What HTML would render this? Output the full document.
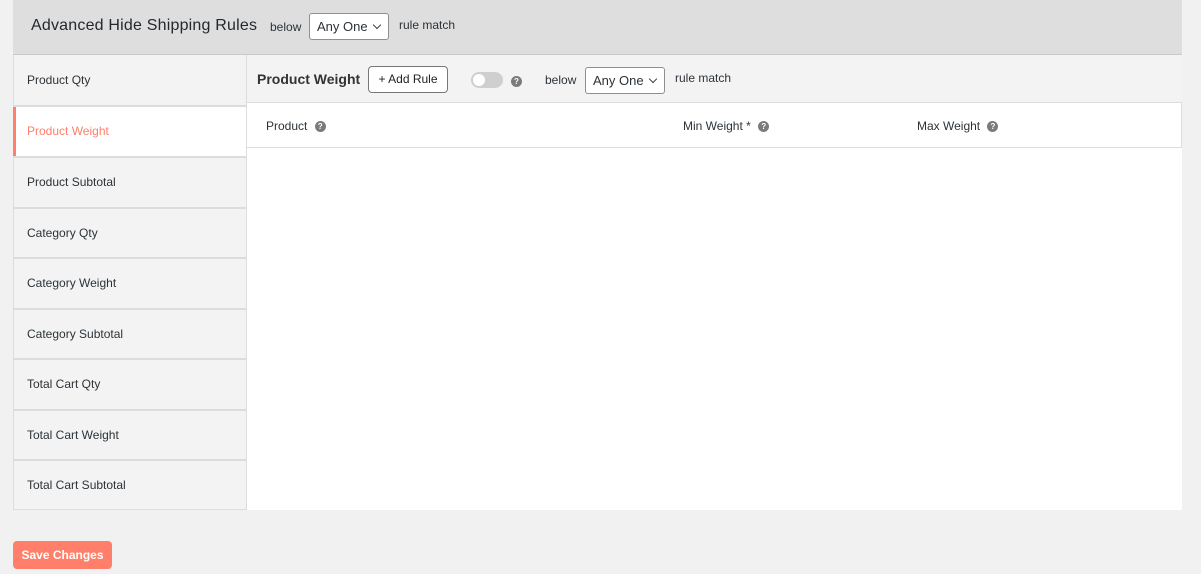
<!DOCTYPE html>
<html><head><style>
*{box-sizing:border-box;margin:0;padding:0}
body{width:1201px;height:574px;background:#f1f1f1;font-family:"Liberation Sans",sans-serif;color:#2c3338;position:relative;overflow:hidden}
.abs{position:absolute}
.hdr{left:13px;top:0;width:1169px;height:55px;background:#dedede;border-bottom:1px solid #c9c9c9}
.sel{position:absolute;background:#fff;border:1px solid #8c8f94;border-radius:3px;font-size:13px;color:#2c3338;padding-left:7px;line-height:25px;height:27px}
.sel:after{content:"";position:absolute;right:8px;top:8px;width:5px;height:5px;border-right:1.5px solid #444;border-bottom:1.5px solid #444;transform:rotate(45deg)}
.side{left:13px;top:55px;width:234px;height:455px;background:#dcdcdc}
.it{position:absolute;left:13px;width:234px;background:#f3f3f3;font-size:12px;padding-left:13px;border-left:1px solid #ddd;border-right:1px solid #ddd}
.q{display:inline-block;width:11px;height:11px;border-radius:50%;background:#7b7b7b;color:#fff;font-size:8px;line-height:11px;text-align:center;font-weight:bold;vertical-align:middle;margin-left:4px}
.main{left:247px;top:55px;width:935px;height:455px;background:#fff}
</style></head><body>
<div class="abs hdr"></div>
<div class="abs" style="left:31px;top:17px;font-size:16px;color:#23282d;letter-spacing:.2px">Advanced Hide Shipping Rules</div>
<div class="abs" style="left:270px;top:20px;font-size:12px">below</div>
<div class="sel" style="left:309px;top:13px;width:80px">Any One</div>
<div class="abs" style="left:399px;top:18px;font-size:12px">rule match</div>

<div class="abs side"></div>
<div class="it" style="top:55px;height:50px;line-height:50px">Product Qty</div>
<div class="it" style="top:107px;height:49px;line-height:49px;background:#fff;color:#ff7f6a;border-left:3px solid #ff7f6a;padding-left:11px">Product Weight</div>
<div class="it" style="top:158px;height:49px;line-height:49px">Product Subtotal</div>
<div class="it" style="top:209px;height:48px;line-height:48px">Category Qty</div>
<div class="it" style="top:259px;height:49px;line-height:49px">Category Weight</div>
<div class="it" style="top:310px;height:48px;line-height:48px">Category Subtotal</div>
<div class="it" style="top:360px;height:49px;line-height:49px">Total Cart Qty</div>
<div class="it" style="top:411px;height:48px;line-height:48px">Total Cart Weight</div>
<div class="it" style="top:461px;height:49px;line-height:49px;border-bottom:1px solid #ddd">Total Cart Subtotal</div>

<div class="abs main"></div>
<div class="abs" style="left:247px;top:55px;width:935px;height:48px;background:#f3f3f3;border-bottom:1px solid #ddd"></div>
<div class="abs" style="left:247px;top:103px;width:935px;height:45px;background:#fff;border-bottom:1px solid #ddd;border-right:1px solid #ddd"></div>
<div class="abs" style="left:257px;top:71px;font-size:14px;color:#333;font-weight:bold">Product Weight</div>
<div class="abs" style="left:368px;top:66px;width:80px;height:27px;border:1px solid #777;border-radius:4px;background:#fff;font-size:12px;line-height:25px;text-align:center;color:#222">+ Add Rule</div>
<div class="abs" style="left:471px;top:72px;width:32px;height:16px;border-radius:8px;background:#cfcfcf"><div style="position:absolute;left:2px;top:2px;width:12px;height:12px;border-radius:50%;background:#fff"></div></div>
<div class="abs" style="left:507px;top:73px"><span class="q">?</span></div>
<div class="abs" style="left:545px;top:73px;font-size:12px">below</div>
<div class="sel" style="left:585px;top:67px;width:80px">Any One</div>
<div class="abs" style="left:675px;top:71px;font-size:12px">rule match</div>
<div class="abs" style="left:266px;top:119px;font-size:12px">Product <span class="q">?</span></div>
<div class="abs" style="left:683px;top:119px;font-size:12px">Min Weight * <span class="q">?</span></div>
<div class="abs" style="left:917px;top:119px;font-size:12px">Max Weight <span class="q">?</span></div>

<div class="abs" style="left:13px;top:541px;width:99px;height:28px;background:#ff7f6a;border-radius:4px;color:#fff;font-size:12px;font-weight:bold;line-height:28px;text-align:center">Save Changes</div>
</body></html>
